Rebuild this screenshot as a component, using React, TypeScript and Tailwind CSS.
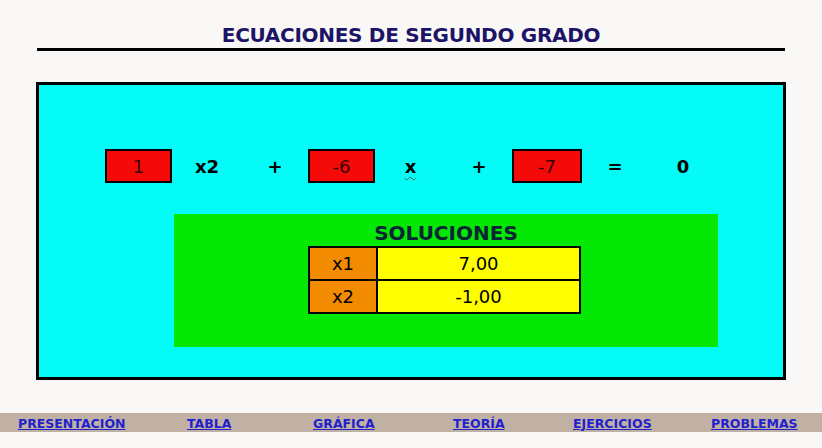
const font = { fontFamily: '"Comic Sans MS", "DejaVu Sans", sans-serif' };

function RedBox({ value, width }: { value: string; width: string }) {
  return (
    <div
      className={`${width} h-[34px] bg-[#f50a0a] border-2 border-black flex items-center justify-center text-[18px] text-[#3a0000]`}
    >
      {value}
    </div>
  );
}

function Cell({ children, width }: { children: React.ReactNode; width: string }) {
  return (
    <div className={`${width} flex items-center justify-center text-[18px] font-bold text-black`}>
      {children}
    </div>
  );
}

const links = [
  { label: "PRESENTACIÓN", w: "w-[169px]" },
  { label: "TABLA", w: "w-[126px]" },
  { label: "GRÁFICA", w: "w-[140px]" },
  { label: "TEORÍA", w: "w-[120px]" },
  { label: "EJERCICIOS", w: "w-[138px]" },
  { label: "PROBLEMAS", w: "w-[90px]" },
];

export default function App() {
  return (
    <div className="w-[822px] h-[448px] bg-[#f9f8f6] flex flex-col overflow-hidden" style={font}>
      {/* Title */}
      <div className="mx-[37px] mt-[23px] border-b-[3px] border-black pb-[1px] flex justify-center">
        <h1 className="text-[20px] leading-[24px] font-bold text-[#1c1466] tracking-[-0.3px]">
          ECUACIONES DE SEGUNDO GRADO
        </h1>
      </div>

      {/* Main panel */}
      <div className="mx-[36px] mt-[31px] h-[298px] bg-[#04fbf8] border-[3px] border-black flex flex-col">
        <div className="mt-[64px] pl-[66px] flex h-[34px]">
          <RedBox value="1" width="w-[67px]" />
          <Cell width="w-[70px]">x2</Cell>
          <Cell width="w-[66px]">+</Cell>
          <RedBox value="-6" width="w-[67px]" />
          <Cell width="w-[71px]">
            <span className="underline decoration-wavy decoration-[#555] decoration-1 underline-offset-[3px]">x</span>
          </Cell>
          <Cell width="w-[66px]">+</Cell>
          <RedBox value="-7" width="w-[70px]" />
          <Cell width="w-[66px]">=</Cell>
          <Cell width="w-[70px]">0</Cell>
        </div>

        <div className="mt-[31px] ml-[135px] w-[544px] h-[133px] bg-[#04e804] flex flex-col items-center">
          <div className="mt-[6px] text-[20px] leading-[26px] font-bold text-[#0a2535]">SOLUCIONES</div>
          <div className="mr-[3px] border-2 border-black w-[273px] flex flex-col text-[18px] text-black">
            <div className="flex h-[33px] border-b-2 border-black">
              <div className="w-[68px] bg-[#f28b00] border-r-2 border-black flex items-center justify-center">x1</div>
              <div className="flex-1 bg-[#fefe00] flex items-center justify-center">7,00</div>
            </div>
            <div className="flex h-[31px]">
              <div className="w-[68px] bg-[#f28b00] border-r-2 border-black flex items-center justify-center">x2</div>
              <div className="flex-1 bg-[#fefe00] flex items-center justify-center">-1,00</div>
            </div>
          </div>
        </div>
      </div>

      {/* Navigation */}
      <div className="mt-[33px] h-[19px] bg-[#c1b1a5] flex items-center pl-[18px]">
        {links.map((l) => (
          <div key={l.label} className={`${l.w} shrink-0`}>
            <a href="#" className="text-[12.5px] leading-[16px] font-bold text-[#2222cc] underline">
              {l.label}
            </a>
          </div>
        ))}
      </div>
    </div>
  );
}
